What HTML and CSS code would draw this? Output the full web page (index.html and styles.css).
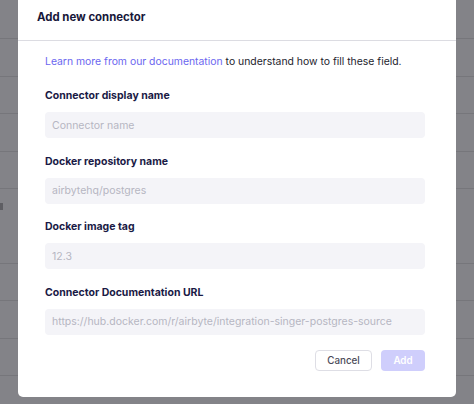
FILE: index.html
```html
<!DOCTYPE html>
<html>
<head>
<meta charset="utf-8">
<link rel="stylesheet" href="styles.css">
</head>
<body>
<div class="backdrop">
  <div class="bg-mark"></div>
</div>
<div class="modal">
  <div class="modal-header">
    <h2 class="modal-title">Add new connector</h2>
  </div>
  <div class="modal-body">
    <p class="intro"><a class="doc-link" href="#">Learn more from our documentation</a> to understand how to fill these field.</p>
    <div class="field">
      <label class="field-label">Connector display name</label>
      <input class="field-input" placeholder="Connector name">
    </div>
    <div class="field">
      <label class="field-label">Docker repository name</label>
      <input class="field-input" placeholder="airbytehq/postgres">
    </div>
    <div class="field">
      <label class="field-label">Docker image tag</label>
      <input class="field-input" placeholder="12.3">
    </div>
    <div class="field">
      <label class="field-label">Connector Documentation URL</label>
      <input class="field-input" placeholder="https://hub.docker.com/r/airbyte/integration-singer-postgres-source">
    </div>
    <div class="actions">
      <button class="btn btn-cancel">Cancel</button>
      <button class="btn btn-add" disabled>Add</button>
    </div>
  </div>
</div>
</body>
</html>
```
FILE: styles.css
```css
html, body {
  margin: 0;
  padding: 0;
  height: 100%;
  overflow: hidden;
}
body {
  font-family: Inter, "Noto Sans", sans-serif;
  background-color: #838388;
}
.backdrop {
  position: fixed;
  inset: 0;
  background-image: repeating-linear-gradient(to bottom, transparent 0px, transparent 1.5px, #76767b 1.5px, #76767b 2.5px, transparent 2.5px, transparent 37.4px);
  background-position: 0 37px;
}
.bg-mark {
  position: absolute;
  left: 0;
  top: 203px;
  width: 3px;
  height: 7px;
  background: #5e5e63;
}
.modal {
  position: absolute;
  left: 18px;
  top: -10px;
  width: 438px;
  height: 407px;
  background: #ffffff;
  border-radius: 5px;
  box-sizing: border-box;
}
.modal-header {
  height: 51px;
  box-sizing: border-box;
  padding: 19px 19px 0;
  border-bottom: 1px solid #dcdce2;
}
.modal-title {
  margin: 0;
  font-size: 11.4px;
  line-height: 17px;
  font-weight: 700;
  color: #17173a;
}
.modal-body {
  padding: 13px 31px 0 27px;
}
.intro {
  margin: 0;
  font-size: 10.4px;
  line-height: 16px;
  color: #23232d;
}
.doc-link {
  color: #6b66f0;
  text-decoration: none;
}
.field {
  display: flex;
  flex-direction: column;
  gap: 8px;
  margin-top: 15.5px;
}
.intro + .field {
  margin-top: 18px;
}
.field-label {
  font-size: 10.5px;
  line-height: 16px;
  font-weight: 700;
  color: #1a1a45;
}
.field-input {
  height: 26px;
  box-sizing: border-box;
  border: none;
  border-radius: 4px;
  background: #f4f4f8;
  padding: 0 7px;
  font-family: Inter, "Noto Sans", sans-serif;
  font-size: 10.5px;
  color: #23232d;
  outline: none;
}
.field-input::placeholder {
  color: #b6b6c2;
}
.actions {
  display: flex;
  justify-content: flex-end;
  gap: 9px;
  margin-top: 15px;
}
.btn {
  height: 21px;
  box-sizing: border-box;
  border-radius: 4px;
  font-family: Inter, "Noto Sans", sans-serif;
  font-size: 9.8px;
  padding: 0;
}
.btn-cancel {
  width: 57px;
  background: #ffffff;
  border: 1px solid #dedee5;
  color: #4a4a58;
  font-weight: 500;
}
.btn-add {
  width: 44px;
  background: #cfcefc;
  border: none;
  color: #ffffff;
  font-weight: 600;
}
```
